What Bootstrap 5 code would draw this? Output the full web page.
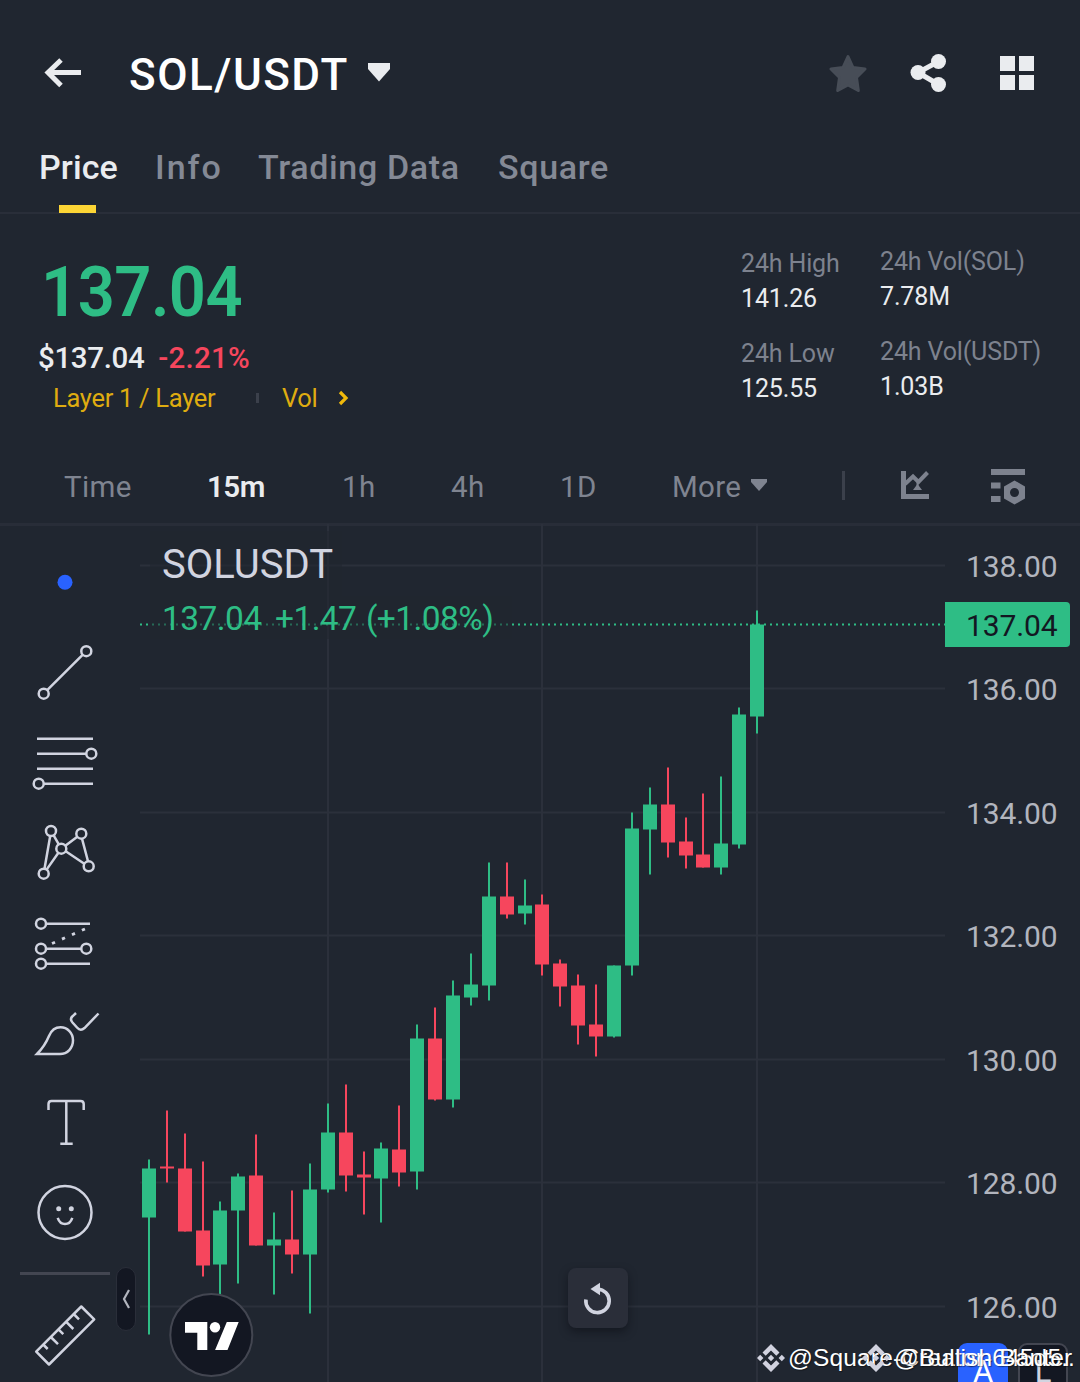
<!DOCTYPE html>
<html lang="en" data-bs-theme="dark">
<head>
<meta charset="utf-8">
<meta name="viewport" content="width=device-width, initial-scale=1">
<title>SOL/USDT</title>
<link rel="stylesheet" href="https://cdn.jsdelivr.net/npm/bootstrap@5.3.0/dist/css/bootstrap.min.css">
<style>
  :root { --ground:#202630; --up:#2ebd85; --down:#f6465d; --ink:#eaecef; --rule:#2b303b; }
  body { background:var(--ground); color:var(--ink); font-family:Roboto,"Liberation Sans",sans-serif; width:1080px; height:1382px; overflow:hidden; }
  svg { display:block; flex:none; }
  .topbar { height:146px; padding:0 46px 0 44px; }
  .pair { font-size:44px; font-weight:500; letter-spacing:1.5px; line-height:60px; margin-left:47px; padding-top:3px; width:238px; color:#fff; }
  .tabs { height:68px; padding-left:39px; border-bottom:2px solid #292e39; }
  .tabs a { font-size:34px; font-weight:500; line-height:42px; color:#848995; text-decoration:none; position:relative; flex:none; white-space:nowrap; letter-spacing:.65px; }
  .tabs a.active { color:var(--ink); letter-spacing:.1px; }
  .tabs a.active::after { content:""; position:absolute; left:20px; top:59px; width:37px; height:8px; background:#fcd535; }
  .tabs .spread { letter-spacing:2px; }
  .summary { height:236px; }
  .last-price { font-size:70px; font-weight:600; line-height:82px; height:80px; color:var(--up); letter-spacing:-.6px; margin-left:41px; transform:scaleX(.93); transform-origin:0 50%; }
  .fiat { font-size:29.5px; font-weight:500; line-height:55px; height:54px; padding-left:38px; white-space:nowrap; letter-spacing:-.35px; }
  .fiat .chg { color:var(--down); margin-left:14px; letter-spacing:.2px; }
  .tagline { font-size:25.5px; line-height:26px; color:#dfac10; padding-left:53px; letter-spacing:-.3px; }
  .tick-sep { width:3px; height:10px; background:#3b404b; }
  .stat { font-size:25px; line-height:35px; white-space:nowrap; letter-spacing:-.15px; }
  .stat dt { font-weight:400; color:#7d828e; }
  .stat dd { margin:0 0 20px; }
  .intervals { height:76px; border-bottom:3px solid #282d38; padding-left:64px; }
  .intervals span { font-size:29.5px; line-height:40px; padding-top:1px; color:#7f8490; flex:none; letter-spacing:.35px; }
  .intervals .on { color:var(--ink); font-weight:600; letter-spacing:-.5px; }
  .chart { height:856px; position:relative; }
  .tools { width:140px; padding-top:11px; }
  .tools svg { fill:none; stroke:#d1d4e0; stroke-width:2.5; }
  .tools hr { margin:15px 0 15px 20px; width:90px; border:0; height:3px; background:#434651; opacity:1; }
  .plot { width:805px; position:relative; }
  .legend-line { position:absolute; left:10px; background:rgba(32,38,48,.55); padding-left:12px; white-space:nowrap; }
  .leg-name { top:5px; height:65px; width:192px; font-size:40px; line-height:67px; color:#d1d4e0; }
  .leg-val { top:70px; height:43px; width:362px; font-size:33.5px; line-height:45px; color:var(--up); letter-spacing:-.6px; }
  .leg-val span { display:inline-block; }
  .axis { width:135px; font-size:30px; color:#b2b5be; margin-top:-21.500px; padding-left:21px; letter-spacing:-.1px; }
  .axis div { line-height:123.55px; }
  .price-tag { position:absolute; left:945px; top:76px; width:125px; height:45px; line-height:47px; padding-left:21px; background:var(--up); color:#131722; font-size:30px; border-radius:0 4px 4px 0; letter-spacing:-.1px; }
  .collapse-tab { position:absolute; left:116px; top:741px; width:20px; height:64px; border-radius:10px; background:#131722; border:1px solid #2a2e39; }
  .tv-mark { position:absolute; left:169px; top:767px; }
  .reset { position:absolute; left:568px; top:742px; width:60px; height:60px; border-radius:8px; background:#2a2e39; box-shadow:0 4px 8px rgba(10,12,18,.5); }
  .mode { position:absolute; top:817px; width:50px; height:60px; border-radius:9px; font-size:31px; line-height:58px; text-align:center; }
  .mode-a { left:958px; background:#2962ff; color:#fff; }
  .mode-l { left:1018px; background:#131722; border:2px solid #434651; color:#d1d4e0; line-height:54px; }
  .stamp { position:absolute; top:817px; height:30px; line-height:32px; font-family:"Liberation Sans",Arial,sans-serif; font-size:24.5px; letter-spacing:.15px; color:#fff; white-space:nowrap; text-shadow:1px 1px 1px rgba(0,0,0,.4); }
</style>
</head>
<body>
<header class="topbar d-flex align-items-center">
  <svg width="38" height="32" viewBox="0 0 38 32" fill="none" stroke="#eaecef" stroke-width="5"><path d="M37 15.500H5M17 3 4 15.500 17 28.500"/></svg>
  <div class="pair">SOL/USDT</div>
  <svg width="24" height="20" viewBox="0 0 24 20" style="margin-top:-2px"><path fill="#eaecef" d="M1 1h22v6L12 19.500 1 7z"/></svg>
  <div class="d-flex align-items-center ms-auto">
    <svg width="38" height="39" viewBox="0 0 38 39"><path d="M19 2.500 24 13.500 36 15 27.500 23.500 29.300 36.500 19 31 8.700 36.500 10.500 23.500 2 15 14 13.500z" fill="#474d57" stroke="#474d57" stroke-width="3" stroke-linejoin="round"/></svg>
    <svg width="38" height="40" viewBox="0 0 38 40" style="margin-left:42px"><g fill="#eaecef"><circle cx="9" cy="19.500" r="7.500"/><circle cx="29.500" cy="8.500" r="7.500"/><circle cx="29.500" cy="31.500" r="7.500"/></g><path d="M29.500 8.500 9 19.500 29.500 31.500" fill="none" stroke="#eaecef" stroke-width="5"/></svg>
    <svg width="34" height="34" viewBox="0 0 34 34" style="margin-left:53px" fill="#eaecef"><path d="M0 0h15v15H0zM19 0h15v15H19zM0 19h15v15H0zM19 19h15v15H19z"/></svg>
  </div>
</header>

<nav class="tabs d-flex">
  <a class="active" href="#" style="width:116px">Price</a>
  <a class="spread" href="#" style="width:103px">Info</a>
  <a href="#" style="width:240px">Trading Data</a>
  <a href="#">Square</a>
</nav>

<section class="summary d-flex">
  <div style="width:741px;padding-top:37px">
    <div class="last-price">137.04</div>
    <div class="fiat">$137.04<span class="chg">-2.21%</span></div>
    <div class="tagline d-flex align-items-center">
      <span style="width:203px">Layer 1 / Layer</span><i class="tick-sep"></i>
      <span style="width:79px;padding-left:23px">Vol</span>
      <svg width="12" height="16" viewBox="0 0 12 16" fill="none" stroke="#f0b90b" stroke-width="3.200"><path d="M2 2 8 8 2 14"/></svg>
    </div>
  </div>
  <dl class="stat mb-0" style="width:139px;padding-top:32px"><dt>24h High</dt><dd>141.26</dd><dt>24h Low</dt><dd>125.55</dd></dl>
  <dl class="stat mb-0" style="padding-top:30px"><dt>24h Vol(SOL)</dt><dd>7.78M</dd><dt>24h Vol(USDT)</dt><dd>1.03B</dd></dl>
</section>

<nav class="intervals d-flex align-items-center">
  <span style="width:143px">Time</span><span class="on" style="width:135px">15m</span><span style="width:109px">1h</span><span style="width:109px">4h</span><span style="width:112px">1D</span><span style="width:79px">More</span>
  <svg width="16" height="12" viewBox="0 0 16 12" style="margin-top:-4px"><path fill="#7f8490" d="M0 0h16v3L8 12 0 3z"/></svg>
  <i style="width:3px;height:29px;background:#3b404b;margin-left:75px;margin-top:-2px"></i>
  <svg width="30" height="30" viewBox="0 0 30 30" style="margin-left:55px;margin-top:-4px" fill="none" stroke="#7d828e"><path d="M3.500 1v25.500H29" stroke-width="5"/><path d="M5 14 13 6.500 18.500 12 27.500 2.500" stroke-width="4"/><path d="M17.500 12v7" stroke-width="2"/><path d="M17.500 14 22 20H13z" fill="#7d828e" stroke="none"/></svg>
  <svg width="36" height="38" viewBox="0 0 36 38" style="margin-left:60px" fill="#7d828e"><path d="M1 1h34v6H1zM1 14.500h9.500v6H1zM1 28h9.500v6H1z"/><path fill-rule="evenodd" d="M24.500 12.500 35 18.500V30.500L24.500 36.500 14 30.500V18.500zM24.500 20a4.500 4.500 0 1 0 0 9 4.500 4.500 0 0 0 0-9z"/></svg>
</nav>

<main class="chart d-flex">
  <aside class="tools d-flex flex-column">
    <svg width="140" height="90" viewBox="0 537 140 90"><circle cx="65" cy="582.300" r="7.500" fill="#2962ff" stroke="none"/></svg>
    <svg width="140" height="90" viewBox="0 627 140 90"><circle cx="86.300" cy="651.200" r="5"/><circle cx="43.700" cy="693.700" r="5"/><path d="M82.800 654.700 47.200 690.200"/></svg>
    <svg width="140" height="90" viewBox="0 717 140 90"><path d="M37 738.700H93M37 753.700H86M37 768.700H93M44 783.700H93"/><circle cx="91.300" cy="753.700" r="5"/><circle cx="38.700" cy="783.700" r="5"/></svg>
    <svg width="140" height="90" viewBox="0 807 140 90"><circle cx="51" cy="831" r="5"/><circle cx="81.300" cy="833.700" r="5"/><circle cx="61.300" cy="848.700" r="5"/><circle cx="43.700" cy="873.700" r="5"/><circle cx="88.700" cy="866.300" r="5"/><path d="M50.200 836 44.500 868.700M53.500 835.200 58.800 844.400M58.400 852.800 46.600 869.600M65.300 845.700 77.300 836.700M65.700 851.300 84.300 863.700M82 838.600 88 861.300"/></svg>
    <svg width="140" height="90" viewBox="0 897 140 90"><circle cx="41" cy="923.700" r="5"/><circle cx="41" cy="948.700" r="5"/><circle cx="86.300" cy="948.700" r="5"/><circle cx="41" cy="963.700" r="5"/><path d="M46 923.700H90M46 948.700H81M46 963.700H90"/><path d="M52 943.500 86 928.500" stroke-width="2.800" stroke-dasharray="3.300 7.600"/></svg>
    <svg width="140" height="90" viewBox="0 987 140 90"><path d="M76 1013 72.500 1016.300Q69.500 1019 72.500 1022.500L77 1027.500Q80.500 1031.500 84.500 1028L98.500 1013.500"/><path d="M37 1054C43 1048 46.500 1042 49 1036 51.500 1030 55 1027.300 60.500 1027.300 67.500 1027.300 73 1033 73 1040.300 73 1048 67.500 1054 60 1054z"/></svg>
    <svg width="140" height="90" viewBox="0 1077 140 90"><path d="M48.500 1110V1104Q48.500 1101 51.500 1101H80.500Q83.700 1101 83.700 1104V1110M66.300 1101V1143.700M60.300 1143.700H72.700"/></svg>
    <svg width="140" height="90" viewBox="0 1167 140 90"><circle cx="65" cy="1212.500" r="26.500"/><g fill="#d1d4e0" stroke="none"><circle cx="58.700" cy="1208.700" r="2.500"/><circle cx="71.300" cy="1208.700" r="2.500"/></g><path d="M57.700 1217.800C59 1221.800 62 1224 65 1224S71 1221.800 72.300 1217.800"/></svg>
    <hr>
    <svg width="140" height="90" viewBox="0 1290 140 90"><path stroke-linejoin="round" d="M81.300 1306.500 94.200 1319.300 49 1364.500 36.200 1351.700zM43.200 1344.500 47.700 1349M50.800 1337 58 1344.200M58.400 1329.300 63.300 1334.200M66 1321.700 73.300 1329M73.700 1314 79 1319.300"/></svg>
  </aside>

  <div class="plot">
    <svg id="candles" width="805" height="858" viewBox="140 524 805 858" style="margin-top:-2px"></svg>
    <div class="legend-line leg-name">SOLUSDT</div>
    <div class="legend-line leg-val"><span style="width:113px">137.04</span><span style="width:91px">+1.47</span><span>(+1.08%)</span></div>
  </div>

  <div class="axis"><div>138.00</div><div>136.00</div><div>134.00</div><div>132.00</div><div>130.00</div><div>128.00</div><div>126.00</div></div>

  <div class="price-tag">137.04</div>
  <div class="collapse-tab"><svg width="18" height="62" viewBox="0 0 18 62" fill="none" stroke="#b2b5be" stroke-width="2.200"><path d="M12 22 7 31 12 40"/></svg></div>
  <svg class="tv-mark" width="85" height="85" viewBox="169 1293 85 85"><circle cx="211.300" cy="1335" r="41" fill="#131722" stroke="#434651" stroke-width="2"/><path fill="#fff" d="M185 1322h22.300v28h-10v-17.300H185zM226.800 1322h11.900l-11.200 28h-12.400z"/><circle cx="215" cy="1327.300" r="5.200" fill="#fff"/></svg>
  <div class="reset"><svg width="60" height="60" viewBox="568 1268 60 60"><path d="M585.900 1299.500A11.700 11.700 0 1 0 597.600 1289.200" fill="none" stroke="#d1d4e0" stroke-width="3.600"/><path d="M590.500 1289 600 1282.700V1295.200z" fill="#d1d4e0"/></svg></div>
  <div class="mode mode-a">A</div>
  <div class="mode mode-l">L</div>
  <svg width="0" height="0" class="position-absolute"><defs><g id="gem" fill="#d1d2df"><path d="M14 0 22.500 8.500 19.300 11.700 14 6.400 8.700 11.700 5.500 8.500zM14 28 5.500 19.500 8.700 16.300 14 21.600 19.300 16.300 22.500 19.500zM3.200 10.800 6.400 14 3.200 17.200 0 14zM24.800 10.800 28 14 24.800 17.200 21.600 14zM14 10.800 17.200 14 14 17.200 10.800 14z"/></g></defs></svg>
  <div class="stamp d-flex align-items-center" style="left:757px"><svg width="28" height="28" style="margin-right:3px"><use href="#gem"/></svg>@Square-Creator-645d5..</div>
  <div class="stamp d-flex align-items-center" style="left:862px"><svg width="28" height="28" style="margin-right:4px"><use href="#gem"/></svg>@Bullish Banter</div>
</main>

<script>
  // x centre, high, body top, body bottom, low, rising
  const data = [
    [149,1159,1168,1218,1335,1],[167,1110,1166,1169,1183,0],[185,1133,1168,1232,1232,0],[203,1161,1230,1266,1277,0],
    [220,1201,1210,1265,1300,1],[238,1173,1176,1211,1284,1],[256,1134,1175,1246,1246,0],[274,1212,1239,1246,1295,1],
    [292,1190,1239,1255,1274,0],[310,1163,1189,1255,1314,1],[328,1103,1132,1190,1193,1],[346,1084,1132,1176,1192,0],
    [364,1151,1174,1178,1215,0],[381,1142,1148,1179,1223,1],[399,1105,1149,1173,1187,0],[417,1024,1038,1172,1190,1],
    [435,1007,1038,1100,1101,0],[453,980,995,1100,1108,1],[471,953,984,998,1006,1],[489,862,896,986,1001,1],
    [507,862,896,915,919,0],[525,879,905,914,925,1],[542,894,904,965,976,0],[560,959,963,987,1007,0],
    [578,974,985,1026,1045,0],[596,984,1024,1037,1057,0],[614,965,965,1037,1038,1],[632,812,828,966,976,1],
    [650,787,804,830,875,1],[668,767,804,843,858,0],[686,817,841,856,869,0],[703,793,854,868,868,0],
    [721,776,843,868,875,1],[739,707,714,845,849,1],[757,610,624,717,734,1]];
  const rect = (x, y, w, h, f) => `<rect x="${x}" y="${y}" width="${w}" height="${h}" fill="${f}"/>`;
  let out = '';
  for (const y of [565.5, 688.5, 812.5, 935.5, 1059.5, 1182.5, 1306.5]) out += rect(140, y - 1, 805, 2, '#2b303b');
  for (const x of [328, 542, 757]) out += rect(x - 1, 524, 2, 858, '#2b303b');
  out += '<path d="M140 624.500H945" stroke="#2ebd85" stroke-width="2" stroke-dasharray="2 4"/>';
  for (const [x, hi, top, bot, lo, up] of data) {
    const f = up ? '#2ebd85' : '#f6465d';
    out += rect(x - 1, hi + .5, 2, lo - hi - 1, f) + rect(x - 7, top + .5, 14, bot - top - 1, f);
  }
  document.getElementById('candles').innerHTML = out;
</script>
<script src="https://cdn.jsdelivr.net/npm/bootstrap@5.3.0/dist/js/bootstrap.bundle.min.js"></script>
</body>
</html>
